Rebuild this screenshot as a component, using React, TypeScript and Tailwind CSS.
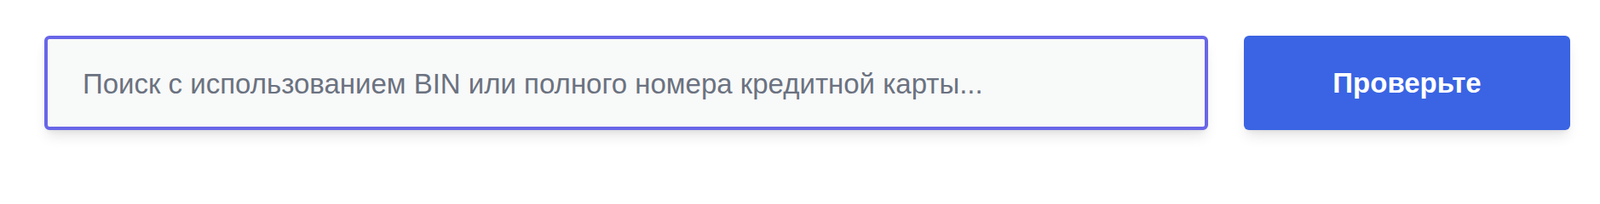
export default function App() {
  return (
    <div className="w-full h-[200px] bg-white pt-[42px] pl-[52px] pr-[35px]">
      <form
        className="flex gap-[42px]"
        onSubmit={(e) => e.preventDefault()}
      >
        <input
          type="text"
          placeholder="Поиск с использованием BIN или полного номера кредитной карты..."
          className="flex-1 h-[111px] rounded-md border-4 border-[#6866e8] bg-[#f8f9f9] pl-[41px] pr-4 pt-[2px] text-[33px] text-[#374151] placeholder:text-[#6b7280] shadow-lg outline-none font-['Liberation_Sans',Arial,sans-serif]"
        />
        <button
          type="submit"
          className="w-[383px] h-[111px] rounded-md bg-[#3a64e3] text-white text-[33px] font-bold shadow-lg font-['Liberation_Sans',Arial,sans-serif]"
        >
          Проверьте
        </button>
      </form>
    </div>
  );
}
